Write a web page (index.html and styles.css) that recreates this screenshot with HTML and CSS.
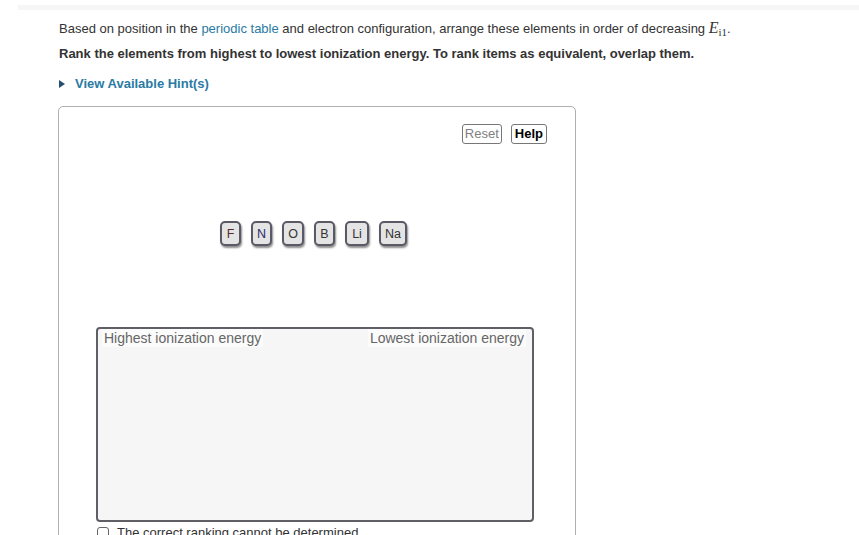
FILE: index.html
```html
<!DOCTYPE html>
<html>
<head>
<meta charset="utf-8">
<link rel="stylesheet" href="styles.css">
</head>
<body>
<div class="topbar"></div>
<div class="content">
  <p class="q">Based on position in the <a class="link">periodic table</a> and electron configuration, arrange these elements in order of decreasing <span class="math"><i>E</i><sub>i1</sub></span>.</p>
  <p class="inst">Rank the elements from highest to lowest ionization energy. To rank items as equivalent, overlap them.</p>
  <div class="hint"><span class="tri"></span><span>View Available Hint(s)</span></div>
  <div class="panel">
    <div class="btns">
      <button class="btn reset">Reset</button>
      <button class="btn help">Help</button>
    </div>
    <div class="tiles">
      <span class="tile t-f">F</span>
      <span class="tile t-n">N</span>
      <span class="tile t-o">O</span>
      <span class="tile t-b">B</span>
      <span class="tile t-li">Li</span>
      <span class="tile t-na">Na</span>
    </div>
    <div class="rank">
      <span class="lbl">Highest ionization energy</span>
      <span class="lbl">Lowest ionization energy</span>
    </div>
    <div class="check"><span class="box"></span><span>The correct ranking cannot be determined.</span></div>
  </div>
</div>
</body>
</html>
```
FILE: styles.css
```css
html, body {
  margin: 0;
  padding: 0;
  background: #fff;
  overflow: hidden;
}
body {
  font-family: "Liberation Sans", Arial, sans-serif;
  color: #333;
  font-size: 13px;
}
.topbar {
  height: 5px;
  margin: 5px 0 0 18px;
  background: #f6f6f6;
}
.content {
  padding-left: 59px;
}
.q {
  margin: 10px 0 0 0;
  line-height: 16px;
  height: 16px;
}
.link {
  color: #2a7aa3;
}
.math {
  font-family: "Liberation Serif", "DejaVu Serif", serif;
  font-size: 16px;
}
.math i {
  font-style: italic;
}
.math sub {
  font-size: 11px;
  vertical-align: -3px;
  line-height: 0;
}
.inst {
  margin: 10px 0 0 0;
  font-weight: bold;
  line-height: 16px;
}
.hint {
  margin-top: 14px;
  display: flex;
  align-items: center;
  gap: 10px;
  color: #2a7aa3;
  font-weight: bold;
  font-size: 13px;
  line-height: 16px;
}
.tri {
  width: 0;
  height: 0;
  border-left: 6px solid #24506e;
  border-top: 4.5px solid transparent;
  border-bottom: 4.5px solid transparent;
}
.panel {
  margin-top: 14px;
  width: 518px;
  height: 460px;
  border: 1px solid #b0b0b0;
  border-radius: 5px;
  box-sizing: border-box;
  margin-left: -1px;
}
.btns {
  display: flex;
  justify-content: flex-end;
  gap: 9px;
  padding: 17px 28px 0 0;
}
.btn {
  font-family: "Liberation Sans", Arial, sans-serif;
  font-size: 13px;
  height: 20px;
  padding: 0 2px;
  background: #fff;
  border: 1px solid #777;
  border-radius: 3px;
  line-height: 18px;
}
.reset {
  color: #808080;
}
.help {
  color: #000;
  font-weight: bold;
  padding: 0 3px;
}
.tiles {
  display: flex;
  gap: 10px;
  padding-left: 161px;
  margin-top: 77px;
}
.tile {
  display: inline-flex;
  align-items: center;
  justify-content: center;
  height: 25px;
  min-width: 21px;
  padding: 0 3px;
  box-sizing: border-box;
  background: #e4e4e4;
  border: 2px solid #5a5a66;
  border-radius: 5px;
  box-shadow: 1px 2px 2px rgba(0,0,0,0.45);
  font-size: 12.5px;
  color: #333;
}
.t-f { color: #5a2a2a; }
.t-n { color: #2a2a6a; }
.t-o { min-width: 22px; }
.t-li { min-width: 24px; }
.t-na { min-width: 28px; }
.rank {
  margin: 81px 0 0 37px;
  width: 438px;
  height: 195px;
  box-sizing: border-box;
  border: 2px solid #5f5f66;
  border-radius: 4px;
  background: #f6f6f6;
  display: flex;
  justify-content: space-between;
  align-items: flex-start;
  padding: 0 6px 0 4px;
}
.lbl {
  background: #fbfbfb;
  color: #666;
  font-size: 14px;
  line-height: 18px;
  padding: 0 2px;
}
.check {
  display: flex;
  align-items: center;
  gap: 8px;
  margin: 3px 0 0 38px;
  font-size: 13px;
  color: #333;
}
.box {
  width: 12px;
  height: 12px;
  border: 1px solid #666;
  border-radius: 3px;
  box-sizing: border-box;
}
```
